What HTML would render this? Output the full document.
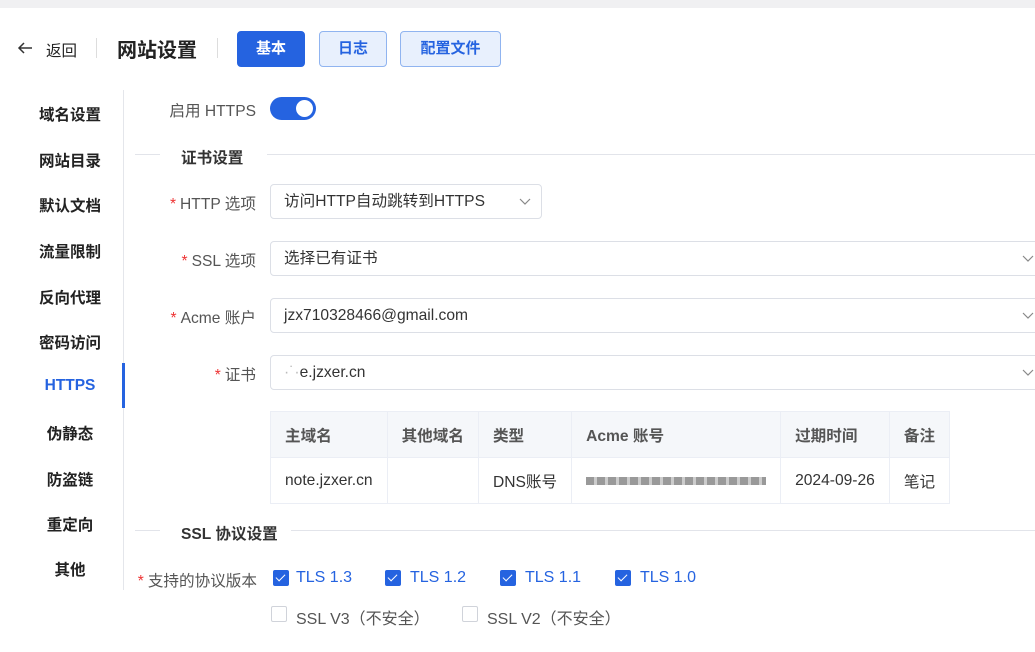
<!DOCTYPE html>
<html><head><meta charset="utf-8"><style>
*{box-sizing:border-box;margin:0;padding:0}
body{width:1035px;height:652px;overflow:hidden;background:#fff;font-family:"Liberation Sans","Noto Sans CJK SC",sans-serif;color:#333;position:relative}
.a{position:absolute;white-space:nowrap}
.top{left:0;top:0;width:1035px;height:8px;background:#f0f0f2}
.btn{height:36px;top:31px;border-radius:4px;font-size:15px;line-height:34px;text-align:center;border:1px solid #90b4f0;background:#e8f0fd;color:#2563e0;font-weight:bold}
.side{font-size:15.5px;color:#222;font-weight:bold;width:124px;text-align:center;left:8px}
.lab{font-size:15.6px;color:#555;right:779px;text-align:right}
.lab i{color:#e33;font-style:normal;margin-right:4px}
.sel{left:270px;height:35px;border:1px solid #dcdfe6;border-radius:4px;font-size:15.6px;color:#333;line-height:33px;padding-left:13px}
.sel svg{position:absolute;right:10px;top:13px}
.sec{font-size:15.6px;font-weight:bold;color:#333;left:181px}
.line{height:1px;background:#e2e4ea}
table{border-collapse:collapse;font-size:15.6px;color:#333}
td{border:1px solid #ebeef5;padding:0 14px;height:46px}
tr:first-child td{background:#f5f7fa;color:#555;font-weight:bold;height:46px}
.cb{width:16px;height:16px;border-radius:2px}
.on{background:#2563e0}
.off{border:1px solid #d0d3da}
.ct{font-size:16px}
.on::after{content:"";position:absolute;left:5px;top:2px;width:4px;height:8px;border:solid #fff;border-width:0 1.5px 1.5px 0;transform:rotate(45deg)}
</style></head><body>
<div class="a top"></div>
<svg class="a" style="left:17px;top:41px" width="16" height="14" viewBox="0 0 16 14"><path d="M15 7H2M7 2L2 7l5 5" stroke="#333" stroke-width="1.5" fill="none"/></svg>
<div class="a" style="left:46px;top:39px;font-size:15.5px;color:#222">返回</div>
<div class="a" style="left:96px;top:38px;width:1px;height:20px;background:#ddd"></div>
<div class="a" style="left:117px;top:34px;font-size:20px;font-weight:bold;color:#222">网站设置</div>
<div class="a" style="left:217px;top:38px;width:1px;height:20px;background:#ddd"></div>
<div class="a btn" style="left:237px;width:68px;background:#2563e0;border-color:#2563e0;color:#fff">基本</div>
<div class="a btn" style="left:319px;width:68px">日志</div>
<div class="a btn" style="left:400px;width:101px">配置文件</div>

<div class="a" style="left:123px;top:90px;width:1px;height:500px;background:#e4e6eb"></div>
<div class="a" style="left:122px;top:363px;width:3px;height:45px;background:#2563e0"></div>
<div class="a side" style="top:103px;left:8px">域名设置</div>
<div class="a side" style="top:149px">网站目录</div>
<div class="a side" style="top:194px">默认文档</div>
<div class="a side" style="top:240px">流量限制</div>
<div class="a side" style="top:286px">反向代理</div>
<div class="a side" style="top:331px">密码访问</div>
<div class="a side" style="top:377px;color:#2563e0">HTTPS</div>
<div class="a side" style="top:422px">伪静态</div>
<div class="a side" style="top:468px">防盗链</div>
<div class="a side" style="top:513px">重定向</div>
<div class="a side" style="top:558px">其他</div>

<div class="a lab" style="top:99px">启用 HTTPS</div>
<div class="a" style="left:270px;top:97px;width:46px;height:23px;border-radius:12px;background:#2563e0"><div style="position:absolute;right:3px;top:3px;width:17px;height:17px;border-radius:50%;background:#fff"></div></div>

<div class="a line" style="left:135px;top:154px;width:25px"></div>
<div class="a sec" style="top:146px">证书设置</div>
<div class="a line" style="left:267px;top:154px;width:768px"></div>

<div class="a lab" style="top:192px"><i>*</i>HTTP 选项</div>
<div class="a sel" style="top:184px;width:272px">访问HTTP自动跳转到HTTPS<svg width="12" height="8" viewBox="0 0 12 8"><path d="M1 1l5 5 5-5" stroke="#888" stroke-width="1.2" fill="none"/></svg></div>
<div class="a lab" style="top:249px"><i>*</i>SSL 选项</div>
<div class="a sel" style="top:241px;width:775px">选择已有证书<svg width="12" height="8" viewBox="0 0 12 8"><path d="M1 1l5 5 5-5" stroke="#888" stroke-width="1.2" fill="none"/></svg></div>
<div class="a lab" style="top:306px"><i>*</i>Acme 账户</div>
<div class="a sel" style="top:298px;width:775px">jzx710328466@gmail.com<svg width="12" height="8" viewBox="0 0 12 8"><path d="M1 1l5 5 5-5" stroke="#888" stroke-width="1.2" fill="none"/></svg></div>
<div class="a lab" style="top:363px"><i>*</i>证书</div>
<div class="a sel" style="top:355px;width:775px"><span style="color:#bbb">·˙·</span>e.jzxer.cn<svg width="12" height="8" viewBox="0 0 12 8"><path d="M1 1l5 5 5-5" stroke="#888" stroke-width="1.2" fill="none"/></svg></div>

<table class="a" style="left:270px;top:411px;width:678px">
<tr><td style="width:118px">主域名</td><td style="width:89px">其他域名</td><td style="width:91px">类型</td><td style="width:212px">Acme 账号</td><td style="width:109px">过期时间</td><td>备注</td></tr>
<tr><td>note.jzxer.cn</td><td></td><td>DNS账号</td><td><div style="width:180px;height:8px;background:repeating-linear-gradient(90deg,#999 0 8px,#ccc 8px 11px)"></div></td><td>2024-09-26</td><td>笔记</td></tr>
</table>

<div class="a line" style="left:135px;top:530px;width:25px"></div>
<div class="a sec" style="top:522px">SSL 协议设置</div>
<div class="a line" style="left:291px;top:530px;width:744px"></div>

<div class="a lab" style="top:569px;right:778px"><i>*</i>支持的协议版本</div>
<div class="a cb on" style="left:273px;top:570px"></div><div class="a ct" style="left:296px;top:569px;color:#2563e0">TLS 1.3</div>
<div class="a cb on" style="left:385px;top:570px"></div><div class="a ct" style="left:410px;top:569px;color:#2563e0">TLS 1.2</div>
<div class="a cb on" style="left:500px;top:570px"></div><div class="a ct" style="left:525px;top:569px;color:#2563e0">TLS 1.1</div>
<div class="a cb on" style="left:615px;top:570px"></div><div class="a ct" style="left:640px;top:569px;color:#2563e0">TLS 1.0</div>
<div class="a cb off" style="left:271px;top:606px"></div><div class="a ct" style="left:296px;top:605px;color:#555">SSL V3（不安全）</div>
<div class="a cb off" style="left:462px;top:606px"></div><div class="a ct" style="left:487px;top:605px;color:#555">SSL V2（不安全）</div>
</body></html>
